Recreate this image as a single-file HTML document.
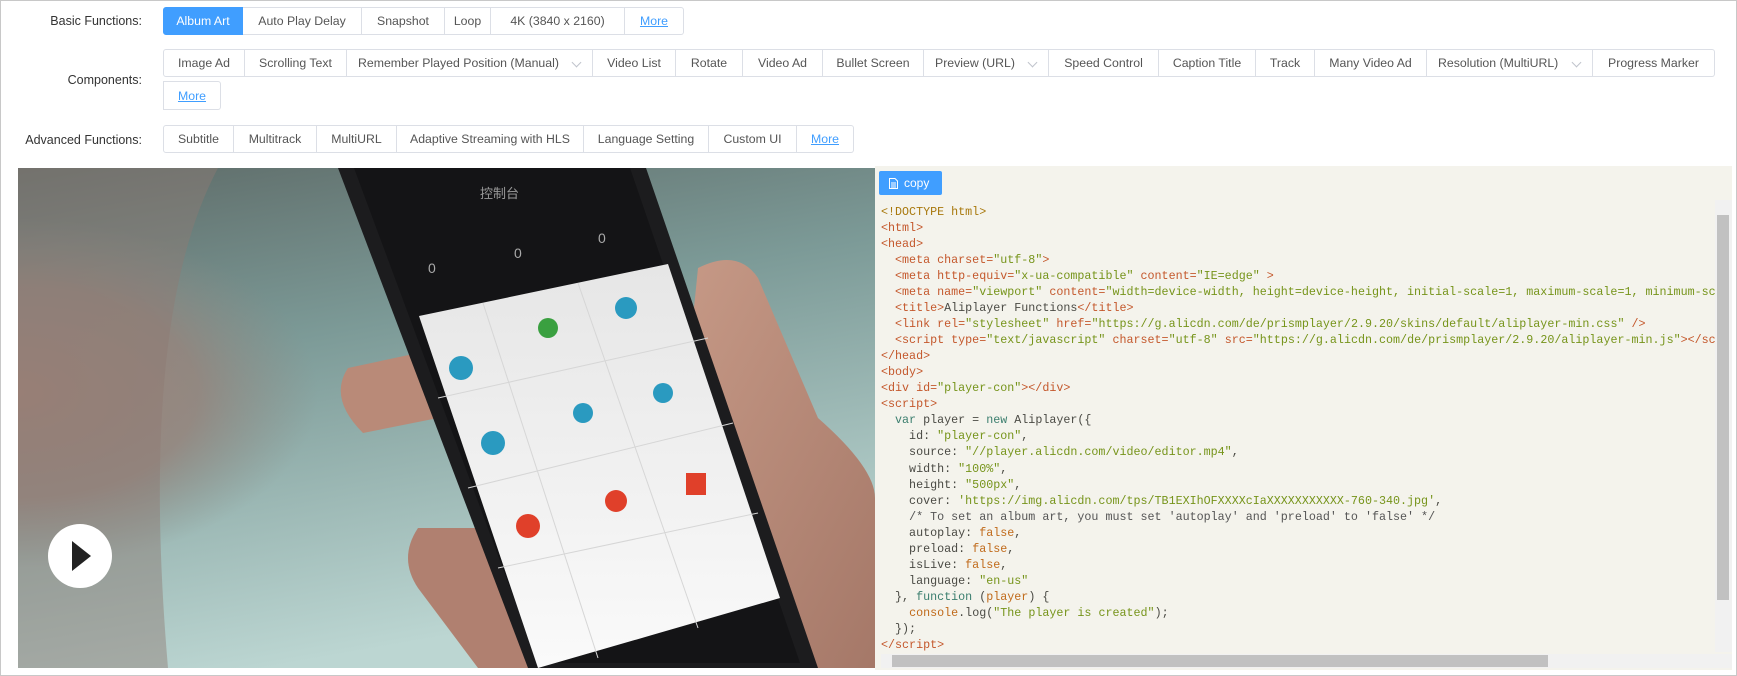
<!DOCTYPE html>
<html><head><meta charset="utf-8">
<style>
*{box-sizing:border-box;margin:0;padding:0}
body{width:1737px;height:676px;overflow:hidden;background:#fff;font-family:"Liberation Sans",Arial,sans-serif;position:relative}
.frame{position:absolute;left:0;top:0;width:1737px;height:676px;border:1px solid #c8c8c8}
.lbl{position:absolute;right:1595px;font-size:12.5px;color:#333;white-space:nowrap}
.row{position:absolute;left:163px;display:flex;height:28px}
.b{height:28px;border:1px solid #dcdfe6;border-left:none;font-size:12.3px;color:#555;display:flex;align-items:center;justify-content:center;background:#fff;white-space:nowrap;position:relative}
.b:first-child{border-left:1px solid #dcdfe6;border-radius:3px 0 0 3px}
.b:last-child{border-radius:0 3px 3px 0}
.act{background:#409eff;color:#fff;border-color:#409eff!important}
.more{color:#409eff;text-decoration:underline}
.dd{justify-content:flex-start;padding-left:11px}
.dd:after{content:"";position:absolute;right:12px;top:9px;width:6px;height:6px;border-right:1px solid #c0c4cc;border-bottom:1px solid #c0c4cc;transform:rotate(45deg)}
.code{position:absolute;left:875px;top:166px;width:857px;height:504px;background:#f4f3ec;overflow:hidden}
.copy{position:absolute;left:4px;top:5px;width:63px;height:24px;background:#409eff;border-radius:2px;color:#fff;font-size:12px;display:flex;align-items:center;padding-left:10px}
pre{position:absolute;left:6px;top:38px;width:834px;overflow:hidden;font-family:"Liberation Mono",monospace;font-size:11.7px;line-height:16.03px;color:#4a4a44}
.t{color:#c4582c}.s{color:#76941a}.d{color:#a8780c}.k{color:#3b7e6e}.f{color:#c06a1a}.c{color:#555}
</style></head><body>
<div class="frame"></div>

<div class="lbl" style="top:14px">Basic Functions:</div>
<div class="row" style="top:7px">
<div class="b act" style="width:80px">Album Art</div><div class="b" style="width:119px">Auto Play Delay</div><div class="b" style="width:83px">Snapshot</div><div class="b" style="width:46px">Loop</div><div class="b" style="width:134px">4K (3840 x 2160)</div><div class="b more" style="width:59px">More</div>
</div>

<div class="lbl" style="top:73px">Components:</div>
<div class="row" style="top:49px">
<div class="b" style="width:82px">Image Ad</div><div class="b" style="width:102px">Scrolling Text</div><div class="b dd" style="width:246px">Remember Played Position (Manual)</div><div class="b" style="width:83px">Video List</div><div class="b" style="width:67px">Rotate</div><div class="b" style="width:80px">Video Ad</div><div class="b" style="width:101px">Bullet Screen</div><div class="b dd" style="width:125px">Preview (URL)</div><div class="b" style="width:110px">Speed Control</div><div class="b" style="width:97px">Caption Title</div><div class="b" style="width:59px">Track</div><div class="b" style="width:112px">Many Video Ad</div><div class="b dd" style="width:166px">Resolution (MultiURL)</div><div class="b" style="width:122px">Progress Marker</div>
</div>
<div class="row" style="top:81px"><div class="b more" style="width:58px;height:29px">More</div></div>

<div class="lbl" style="top:133px">Advanced Functions:</div>
<div class="row" style="top:125px">
<div class="b" style="width:71px">Subtitle</div><div class="b" style="width:83px">Multitrack</div><div class="b" style="width:80px">MultiURL</div><div class="b" style="width:187px">Adaptive Streaming with HLS</div><div class="b" style="width:125px">Language Setting</div><div class="b" style="width:88px">Custom UI</div><div class="b more" style="width:57px">More</div>
</div>

<svg style="position:absolute;left:18px;top:168px" width="857" height="500" viewBox="0 0 857 500">
<defs>
<linearGradient id="bg" x1="0" y1="0" x2="0.3" y2="1"><stop offset="0" stop-color="#5e6b68"/><stop offset="0.4" stop-color="#7c9a97"/><stop offset="1" stop-color="#bcd6d2"/></linearGradient>
<radialGradient id="lf" cx="0" cy="0.45" r="0.35"><stop offset="0" stop-color="#a08378"/><stop offset="0.6" stop-color="#96827a" stop-opacity="0.8"/><stop offset="1" stop-color="#8a8a84" stop-opacity="0"/></radialGradient>
<linearGradient id="scr" x1="0" y1="0" x2="0" y2="1"><stop offset="0" stop-color="#e6e6e6"/><stop offset="1" stop-color="#fafafa"/></linearGradient>
<linearGradient id="skin" x1="0" y1="0" x2="1" y2="1"><stop offset="0" stop-color="#c89b88"/><stop offset="1" stop-color="#a57868"/></linearGradient>
</defs>
<rect width="857" height="500" fill="url(#bg)"/>
<rect width="857" height="500" fill="url(#lf)"/>
<path d="M0 0 H200 Q120 150 150 500 H0Z" fill="#8d7a74" opacity="0.45"/>
<path d="M680 100 Q720 80 740 110 L800 250 Q857 300 857 330 V500 H640 Z" fill="url(#skin)"/>
<path d="M330 200 Q310 230 345 265 L420 250 L400 185 Z" fill="#b98a78"/>
<path d="M400 360 Q380 390 400 420 L460 500 H540 L500 360 Z" fill="#b08070"/>
<path d="M320 0 H628 L800 500 H510 Z" fill="#1c1c1e"/>
<path d="M336 0 H612 L782 495 H520 Z" fill="#141416"/>
<path d="M401 148 L650 96 L762 430 L520 500 Z" fill="url(#scr)"/>
<g stroke="#d6d6d6" stroke-width="1"><line x1="465" y1="135" x2="580" y2="490"/><line x1="560" y1="115" x2="680" y2="460"/><line x1="420" y1="230" x2="690" y2="170"/><line x1="450" y1="320" x2="715" y2="255"/><line x1="480" y1="400" x2="740" y2="345"/></g>
<circle cx="443" cy="200" r="12" fill="#2a9ac0"/><circle cx="530" cy="160" r="10" fill="#3aa040"/><circle cx="608" cy="140" r="11" fill="#2a9ac0"/>
<circle cx="475" cy="275" r="12" fill="#2a9ac0"/><circle cx="565" cy="245" r="10" fill="#2a9ac0"/><circle cx="645" cy="225" r="10" fill="#2a9ac0"/>
<circle cx="510" cy="358" r="12" fill="#e0402a"/><circle cx="598" cy="333" r="11" fill="#e0402a"/><rect x="668" y="305" width="20" height="22" fill="#e0402a"/>
<text x="462" y="30" fill="#9a9a9a" font-size="13" font-family="Noto Sans CJK SC,sans-serif">控制台</text>
<text x="410" y="105" fill="#aaa" font-size="14" font-family="Liberation Sans,sans-serif">0</text>
<text x="496" y="90" fill="#aaa" font-size="14" font-family="Liberation Sans,sans-serif">0</text>
<text x="580" y="75" fill="#aaa" font-size="14" font-family="Liberation Sans,sans-serif">0</text>
<circle cx="62" cy="388" r="32" fill="#fff"/>
<path d="M54 373 L73 388 L54 403 Z" fill="#222"/>
</svg>

<div class="code">
<div class="copy"><svg width="9" height="11" viewBox="0 0 9 11" style="margin-right:6px"><path d="M0.5 0.5H6L8.5 3V10.5H0.5Z" fill="none" stroke="#fff"/><path d="M2 5H7M2 7H7M2 9H7" stroke="#fff"/></svg>copy</div>
<pre><span class="d">&lt;!DOCTYPE html&gt;</span>
<span class="t">&lt;html&gt;</span>
<span class="t">&lt;head&gt;</span>
  <span class="t">&lt;meta charset=</span><span class="s">"utf-8"</span><span class="t">&gt;</span>
  <span class="t">&lt;meta http-equiv=</span><span class="s">"x-ua-compatible"</span><span class="t"> content=</span><span class="s">"IE=edge"</span><span class="t"> &gt;</span>
  <span class="t">&lt;meta name=</span><span class="s">"viewport"</span><span class="t"> content=</span><span class="s">"width=device-width, height=device-height, initial-scale=1, maximum-scale=1, minimum-scale=1, user-scalable=no"</span>
  <span class="t">&lt;title&gt;</span>Aliplayer Functions<span class="t">&lt;/title&gt;</span>
  <span class="t">&lt;link rel=</span><span class="s">"stylesheet"</span><span class="t"> href=</span><span class="s">"https://g.alicdn.com/de/prismplayer/2.9.20/skins/default/aliplayer-min.css"</span><span class="t"> /&gt;</span>
  <span class="t">&lt;script type=</span><span class="s">"text/javascript"</span><span class="t"> charset=</span><span class="s">"utf-8"</span><span class="t"> src=</span><span class="s">"https://g.alicdn.com/de/prismplayer/2.9.20/aliplayer-min.js"</span><span class="t">&gt;&lt;/script&gt;</span>
<span class="t">&lt;/head&gt;</span>
<span class="t">&lt;body&gt;</span>
<span class="t">&lt;div id=</span><span class="s">"player-con"</span><span class="t">&gt;&lt;/div&gt;</span>
<span class="t">&lt;script&gt;</span>
  <span class="k">var</span> player = <span class="k">new</span> Aliplayer({
    id: <span class="s">"player-con"</span>,
    source: <span class="s">"//player.alicdn.com/video/editor.mp4"</span>,
    width: <span class="s">"100%"</span>,
    height: <span class="s">"500px"</span>,
    cover: <span class="s">'https://img.alicdn.com/tps/TB1EXIhOFXXXXcIaXXXXXXXXXXX-760-340.jpg'</span>,
    <span class="c">/* To set an album art, you must set 'autoplay' and 'preload' to 'false' */</span>
    autoplay: <span class="f">false</span>,
    preload: <span class="f">false</span>,
    isLive: <span class="f">false</span>,
    language: <span class="s">"en-us"</span>
  }, <span class="k">function</span> (<span class="f">player</span>) {
    <span class="f">console</span>.log(<span class="s">"The player is created"</span>);
  });
<span class="t">&lt;/script&gt;</span></pre>
<div style="position:absolute;left:840px;top:34px;width:17px;height:452px;background:#f1f1f1"></div>
<div style="position:absolute;left:842px;top:49px;width:12px;height:385px;background:#c1c1c1"></div>
<div style="position:absolute;left:6px;top:488px;width:851px;height:14px;background:#f1f1f1"></div>
<div style="position:absolute;left:17px;top:489px;width:656px;height:12px;background:#c1c1c1"></div>
</div>
</body></html>
